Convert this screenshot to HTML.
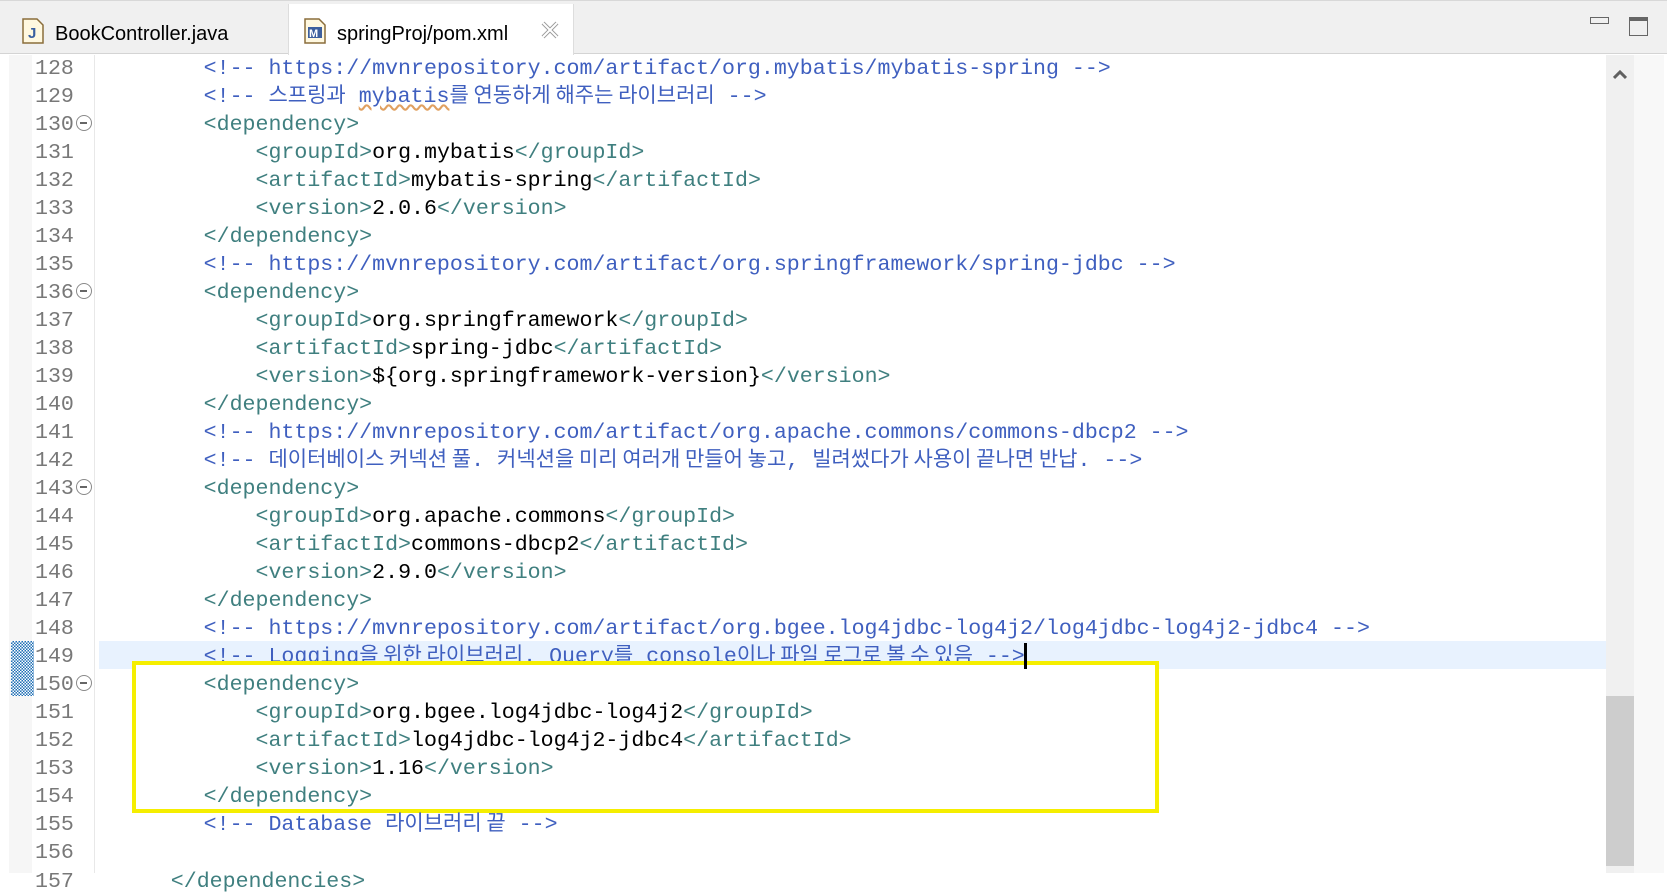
<!DOCTYPE html>
<html><head><meta charset="utf-8"><style>
*{margin:0;padding:0;box-sizing:border-box}
body{width:1667px;height:873px;overflow:hidden;background:#fff;position:relative;font-family:"Liberation Mono","Noto Sans CJK KR",monospace}
.tabbar{position:absolute;left:0;top:0;width:1667px;height:54px;background:#f0f0f0;border-top:1px solid #d8d8d8;border-bottom:1px solid #d4d4d4}
.tab{position:absolute;top:4px;height:50px;font-family:"Liberation Sans","Noto Sans CJK KR",sans-serif;font-size:20px;color:#000;line-height:60px}
.ln{position:absolute;left:35px;width:50px;font-size:21.6px;color:#787878;line-height:28px;height:28px;padding-top:2px}
.code{position:absolute;left:100px;font-size:21.6px;line-height:28px;height:28px;white-space:pre;color:#000;padding-top:2px}
.c{color:#3f5fbf}.t{color:#3f7f7f}
.k{font-family:"Noto Sans CJK KR",sans-serif;font-size:21px;line-height:20px}
.fold{position:absolute;left:76px;width:16px;height:16px;border:1.5px solid #8a8a8a;border-radius:50%;background:#fff}
.fold:after{content:"";position:absolute;left:3px;top:6px;width:7px;height:1.5px;background:#666}
</style></head><body>
<div class="tabbar"></div>
<div class="tab" style="left:10px;width:278px">
 <svg style="position:absolute;left:12px;top:14px" width="22" height="26" viewBox="0 0 22 26"><path d="M1 1h14l6 6v18H1z" fill="#fff8e0" stroke="#8a6d3b" stroke-width="1.5"/><text x="6" y="20" font-family="Liberation Sans" font-weight="bold" font-size="15" fill="#3a5fa0">J</text></svg>
 <span style="position:absolute;left:45px">BookController.java</span></div>
<div class="tab" style="left:288px;width:286px;background:#fff;border-left:1px solid #ddd;border-right:1px solid #ddd;height:51px">
 <svg style="position:absolute;left:15px;top:14px" width="22" height="26" viewBox="0 0 22 26"><path d="M1 1h14l6 6v18H1z" fill="#fff8e0" stroke="#8a6d3b" stroke-width="1.5"/><rect x="4" y="9" width="14" height="11" fill="#3d5f9e"/><text x="5" y="19" font-family="Liberation Sans" font-weight="bold" font-size="11" fill="#fff">M</text></svg>
 <span style="position:absolute;left:48px">springProj/pom.xml</span>
 <svg style="position:absolute;left:252px;top:17px" width="18" height="18" viewBox="0 0 18 18"><path d="M2 2l14 14M16 2L2 16" stroke="#999" stroke-width="4"/><path d="M2 2l14 14M16 2L2 16" stroke="#fff" stroke-width="2"/></svg></div>
<div style="position:absolute;left:1590px;top:17px;width:19px;height:7px;border:1.5px solid #666"></div>
<div style="position:absolute;left:1629px;top:17px;width:19px;height:19px;border:1.5px solid #666;border-top-width:4px"></div>

<div style="position:absolute;left:9px;top:55px;width:23px;height:818px;background:#f6f6f6"></div>
<div style="position:absolute;left:11px;top:641px;width:23px;height:55px;background:repeating-conic-gradient(#1f6fb5 0 25%,#fff 0 50%) 0 0/3px 3px"></div>
<div style="position:absolute;left:94px;top:55px;width:1px;height:818px;background:#e8e8e8"></div>
<div style="position:absolute;left:99px;top:641px;width:1507px;height:28px;background:#e8f2fe"></div>
<div style="position:absolute;left:1606px;top:55px;width:28px;height:818px;background:#f0f0f0"></div>
<div style="position:absolute;left:1634px;top:55px;width:30px;height:818px;background:#f8f8f8"></div>
<div style="position:absolute;left:1606px;top:696px;width:28px;height:170px;background:#cdcdcd"></div>
<svg style="position:absolute;left:1613px;top:70px" width="14" height="10" viewBox="0 0 14 10"><path d="M1 8L7 2l6 6" stroke="#606060" stroke-width="3" fill="none"/></svg>

<div class="ln" style="top:53px">128</div><div class="code" style="top:53px">        <span class="c">&lt;!-- https://mvnrepository.com/artifact/org.mybatis/mybatis-spring --&gt;</span></div>
<div class="ln" style="top:81px">129</div><div class="code" style="top:81px">        <span class="c">&lt;!-- <span class="k">스프링과</span> <span style="text-decoration:underline wavy #e0a060">mybatis</span><span class="k">를 연동하게 해주는 라이브러리</span> --&gt;</span></div>
<div class="ln" style="top:109px">130</div><div class="fold" style="top:115px"></div><div class="code" style="top:109px">        <span class="t">&lt;dependency&gt;</span></div>
<div class="ln" style="top:137px">131</div><div class="code" style="top:137px">            <span class="t">&lt;groupId&gt;</span>org.mybatis<span class="t">&lt;/groupId&gt;</span></div>
<div class="ln" style="top:165px">132</div><div class="code" style="top:165px">            <span class="t">&lt;artifactId&gt;</span>mybatis-spring<span class="t">&lt;/artifactId&gt;</span></div>
<div class="ln" style="top:193px">133</div><div class="code" style="top:193px">            <span class="t">&lt;version&gt;</span>2.0.6<span class="t">&lt;/version&gt;</span></div>
<div class="ln" style="top:221px">134</div><div class="code" style="top:221px">        <span class="t">&lt;/dependency&gt;</span></div>
<div class="ln" style="top:249px">135</div><div class="code" style="top:249px">        <span class="c">&lt;!-- https://mvnrepository.com/artifact/org.springframework/spring-jdbc --&gt;</span></div>
<div class="ln" style="top:277px">136</div><div class="fold" style="top:283px"></div><div class="code" style="top:277px">        <span class="t">&lt;dependency&gt;</span></div>
<div class="ln" style="top:305px">137</div><div class="code" style="top:305px">            <span class="t">&lt;groupId&gt;</span>org.springframework<span class="t">&lt;/groupId&gt;</span></div>
<div class="ln" style="top:333px">138</div><div class="code" style="top:333px">            <span class="t">&lt;artifactId&gt;</span>spring-jdbc<span class="t">&lt;/artifactId&gt;</span></div>
<div class="ln" style="top:361px">139</div><div class="code" style="top:361px">            <span class="t">&lt;version&gt;</span>${org.springframework-version}<span class="t">&lt;/version&gt;</span></div>
<div class="ln" style="top:389px">140</div><div class="code" style="top:389px">        <span class="t">&lt;/dependency&gt;</span></div>
<div class="ln" style="top:417px">141</div><div class="code" style="top:417px">        <span class="c">&lt;!-- https://mvnrepository.com/artifact/org.apache.commons/commons-dbcp2 --&gt;</span></div>
<div class="ln" style="top:445px">142</div><div class="code" style="top:445px">        <span class="c">&lt;!-- <span class="k">데이터베이스 커넥션 풀</span>. <span class="k">커넥션을 미리 여러개 만들어 놓고</span>, <span class="k">빌려썼다가 사용이 끝나면 반납</span>. --&gt;</span></div>
<div class="ln" style="top:473px">143</div><div class="fold" style="top:479px"></div><div class="code" style="top:473px">        <span class="t">&lt;dependency&gt;</span></div>
<div class="ln" style="top:501px">144</div><div class="code" style="top:501px">            <span class="t">&lt;groupId&gt;</span>org.apache.commons<span class="t">&lt;/groupId&gt;</span></div>
<div class="ln" style="top:529px">145</div><div class="code" style="top:529px">            <span class="t">&lt;artifactId&gt;</span>commons-dbcp2<span class="t">&lt;/artifactId&gt;</span></div>
<div class="ln" style="top:557px">146</div><div class="code" style="top:557px">            <span class="t">&lt;version&gt;</span>2.9.0<span class="t">&lt;/version&gt;</span></div>
<div class="ln" style="top:585px">147</div><div class="code" style="top:585px">        <span class="t">&lt;/dependency&gt;</span></div>
<div class="ln" style="top:613px">148</div><div class="code" style="top:613px">        <span class="c">&lt;!-- https://mvnrepository.com/artifact/org.bgee.log4jdbc-log4j2/log4jdbc-log4j2-jdbc4 --&gt;</span></div>
<div class="ln" style="top:641px">149</div><div class="code" style="top:641px">        <span class="c">&lt;!-- Logging<span class="k">을 위한 라이브러리</span>. Query<span class="k">를</span> console<span class="k">이나 파일 로그로 볼 수 있음</span> --&gt;</span></div>

<div style="position:absolute;left:132px;top:661px;width:1027px;height:152px;border:4px solid #f5ee00;background:#fff;z-index:1"></div>
<div style="position:absolute;left:1024px;top:643px;width:3px;height:26px;background:#000;z-index:3"></div>

<div style="position:relative;z-index:2">
<div class="ln" style="top:669px">150</div><div class="fold" style="top:675px"></div><div class="code" style="top:669px">        <span class="t">&lt;dependency&gt;</span></div>
<div class="ln" style="top:697px">151</div><div class="code" style="top:697px">            <span class="t">&lt;groupId&gt;</span>org.bgee.log4jdbc-log4j2<span class="t">&lt;/groupId&gt;</span></div>
<div class="ln" style="top:725px">152</div><div class="code" style="top:725px">            <span class="t">&lt;artifactId&gt;</span>log4jdbc-log4j2-jdbc4<span class="t">&lt;/artifactId&gt;</span></div>
<div class="ln" style="top:753px">153</div><div class="code" style="top:753px">            <span class="t">&lt;version&gt;</span>1.16<span class="t">&lt;/version&gt;</span></div>
<div class="ln" style="top:781px">154</div><div class="code" style="top:781px">        <span class="t">&lt;/dependency&gt;</span></div>
<div class="ln" style="top:809px">155</div><div class="code" style="top:809px">        <span class="c">&lt;!-- Database <span class="k">라이브러리 끝</span> --&gt;</span></div>
<div class="ln" style="top:837px">156</div>
<div class="ln" style="top:866px">157</div><div class="code" style="top:866px;left:106px">     <span class="t">&lt;/dependencies&gt;</span></div>
</div>
</body></html>
